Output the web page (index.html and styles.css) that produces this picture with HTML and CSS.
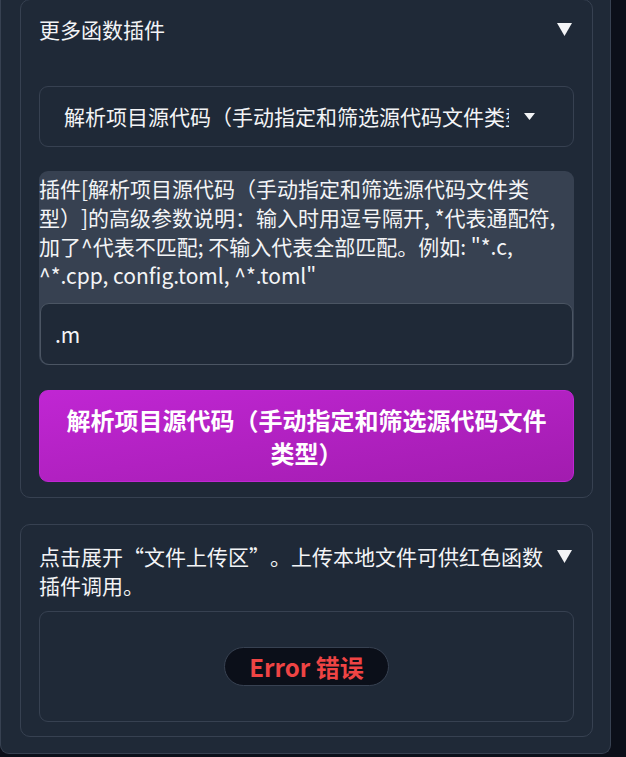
FILE: index.html
```html
<!DOCTYPE html>
<html lang="zh-CN">
<head>
    <meta charset="UTF-8">
    <meta name="viewport" content="width=device-width, initial-scale=1.0">
    <title>更多函数插件</title>
    <link rel="stylesheet" href="styles.css">
</head>
<body>
    <div class="panel">
        <div class="accordion first">
            <div class="acc-head">
                <span class="acc-title">更多函数插件</span>
                <svg class="acc-arrow" width="15" height="14" viewBox="0 0 15 14"><polygon points="0,1 15,1 7.5,14" fill="#f3f4f6"/></svg>
            </div>

            <div class="dropdown">
                <span class="dropdown-text">解析项目源代码（手动指定和筛选源代码文件类型）</span>
                <svg class="caret" width="11" height="7" viewBox="0 0 11 7"><polygon points="0,0 11,0 5.5,7" fill="#f3f4f6"/></svg>
            </div>

            <div class="arg-block">
                <p class="arg-info">插件[解析项目源代码（手动指定和筛选源代码文件类型）]的高级参数说明：输入时用逗号隔开, *代表通配符, 加了^代表不匹配; 不输入代表全部匹配。例如: "*.c, ^*.cpp, config.toml, ^*.toml"</p>
                <div class="arg-input">.m</div>
            </div>

            <button class="run-btn">解析项目源代码（手动指定和筛选源代码文件类型）</button>
        </div>

        <div class="accordion">
            <div class="acc-head">
                <span class="acc-title">点击展开“文件上传区”。上传本地文件可供红色函数插件调用。</span>
                <svg class="acc-arrow" width="15" height="14" viewBox="0 0 15 14"><polygon points="0,1 15,1 7.5,14" fill="#f3f4f6"/></svg>
            </div>

            <div class="upload-box">
                <span class="error-pill">Error 错误</span>
            </div>
        </div>
    </div>
</body>
</html>
```

FILE: styles.css
```css
* {
    margin: 0;
    padding: 0;
    box-sizing: border-box;
}

body {
    background: #0b0f19;
    font-family: "Noto Sans CJK SC", "Noto Sans", sans-serif;
    color: #f3f4f6;
    font-size: 21px;
    line-height: 29px;
    text-spacing-trim: space-all;
}

.panel {
    width: 611px;
    background: #1f2937;
    border: 1px solid #374151;
    border-top: none;
    border-radius: 0 0 9px 9px;
    padding: 0 17px 16px 19px;
}

.accordion {
    border: 1px solid #374151;
    border-radius: 10px;
    padding: 17px 18px 14px 18px;
}

.accordion.first {
    margin-top: -1px;
    margin-bottom: 26px;
    padding-top: 15px;
    padding-bottom: 15px;
}

.acc-head {
    display: flex;
    justify-content: space-between;
    align-items: flex-start;
    gap: 12px;
}

.acc-arrow {
    flex-shrink: 0;
    margin-top: 7px;
    margin-right: 2px;
}

.first .acc-head {
    margin-bottom: 42px;
}

.dropdown {
    display: flex;
    align-items: center;
    height: 61px;
    border: 1px solid #374151;
    border-radius: 9px;
    padding: 0 38px 0 24px;
}

.dropdown-text {
    width: 445px;
    white-space: nowrap;
    overflow: hidden;
}

.caret {
    margin-left: auto;
}

.arg-block {
    margin-top: 24px;
    background: #374151;
    border-radius: 9px;
    padding: 3px 1px 0 1px;
}

.arg-info {
    padding: 0 0 13px 0;
    margin-left: -1px;
}

.arg-input {
    height: 62px;
    background: #1f2937;
    border: 1px solid #4b5563;
    border-radius: 9px;
    padding: 0 14px;
    display: flex;
    align-items: center;
}

.run-btn {
    display: block;
    width: 100%;
    margin-top: 25px;
    padding: 12px 16px;
    border: 1px solid #c026d3;
    border-radius: 9px;
    background: linear-gradient(to bottom right, #c026d3, #a21caf);
    color: #fff;
    font-family: "Noto Sans CJK SC", "Noto Sans", sans-serif;
    font-size: 24px;
    font-weight: 700;
    line-height: 33px;
    text-align: center;
    text-spacing-trim: space-all;
}

.accordion .acc-head + .upload-box {
    margin-top: 11px;
}

.upload-box {
    height: 111px;
    border: 1px solid #374151;
    border-radius: 9px;
    display: flex;
    align-items: center;
    justify-content: center;
}

.error-pill {
    display: inline-flex;
    align-items: center;
    height: 39px;
    padding: 0 24px;
    background: #0b0f19;
    border: 1px solid #374151;
    border-radius: 20px;
    color: #ef4444;
    font-size: 24px;
    font-weight: 700;
}
```
